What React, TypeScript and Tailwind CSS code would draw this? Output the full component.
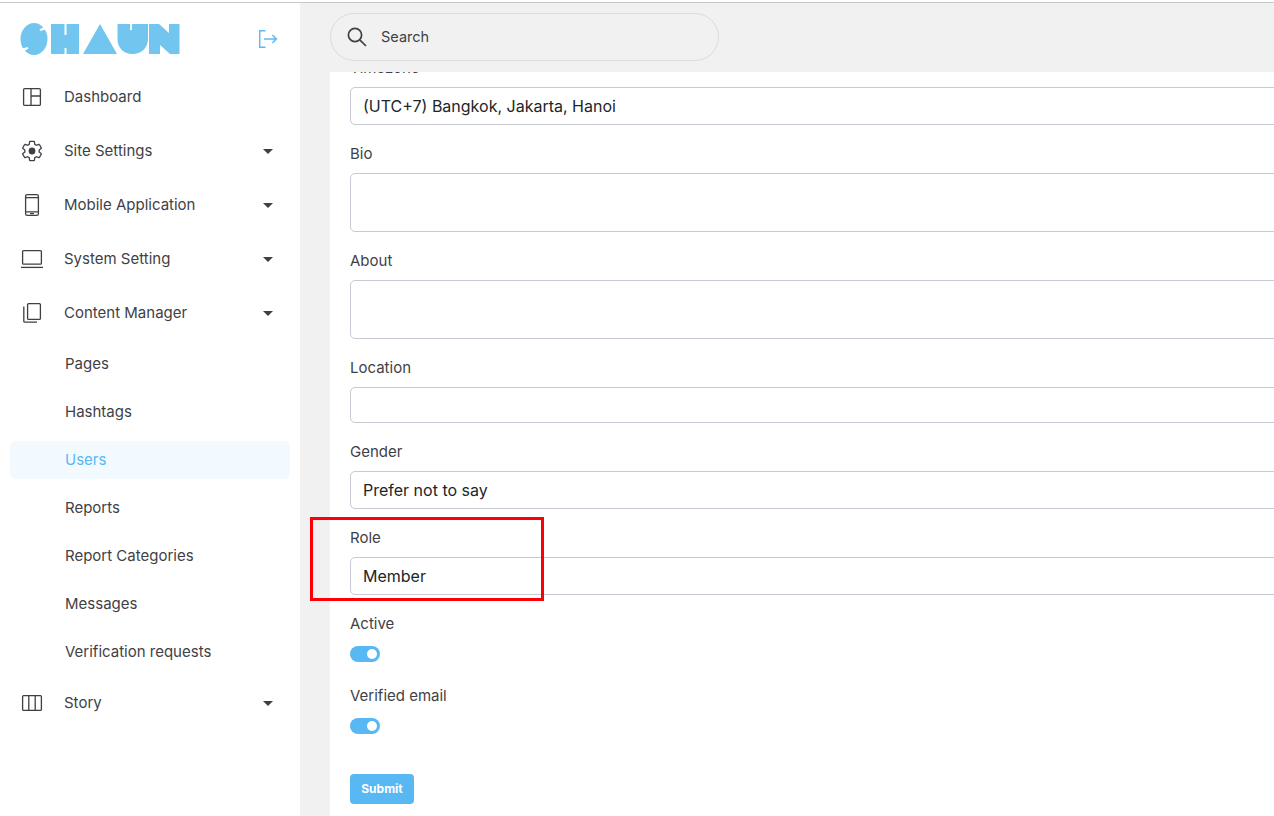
import React from "react";

const Caret = () => (
  <svg width="10" height="5" viewBox="0 0 10 5" className="shrink-0">
    <path d="M0 0H10L5 5Z" fill="#3f3f46" />
  </svg>
);

const s = { fill: "none", stroke: "#3f3f46", strokeWidth: 1.3 };

const DashIcon = () => (
  <svg width="24" height="24" viewBox="0 0 24 24">
    <rect x="3.6" y="3.6" width="16.8" height="16.8" rx="1.2" {...s} />
    <path d="M11 3.6V20.4M11 11H20.4" {...s} />
  </svg>
);
const GearIcon = () => (
  <svg width="24" height="24" viewBox="0 0 24 24">
    <path
      d="M19.14 12.94c.04-.3.06-.61.06-.94 0-.32-.02-.64-.07-.94l2.03-1.58c.18-.14.23-.41.12-.61l-1.92-3.32c-.12-.22-.37-.29-.59-.22l-2.39.96c-.5-.38-1.03-.7-1.62-.94l-.36-2.54c-.04-.24-.24-.41-.48-.41h-3.84c-.24 0-.43.17-.47.41l-.36 2.54c-.59.24-1.13.57-1.62.94l-2.39-.96c-.22-.08-.47 0-.59.22L2.74 8.87c-.12.21-.08.47.12.61l2.03 1.58c-.05.3-.09.63-.09.94s.02.64.07.94l-2.03 1.58c-.18.14-.23.41-.12.61l1.92 3.32c.12.22.37.29.59.22l2.39-.96c.5.38 1.03.7 1.62.94l.36 2.54c.05.24.24.41.48.41h3.84c.24 0 .44-.17.47-.41l.36-2.54c.59-.24 1.13-.56 1.62-.94l2.39.96c.22.08.47 0 .59-.22l1.92-3.32c.12-.22.07-.47-.12-.61l-2.01-1.58z"
      {...s}
    />
    <circle cx="12" cy="12" r="3.4" fill="#3f3f46" />
  </svg>
);
const PhoneIcon = () => (
  <svg width="24" height="24" viewBox="0 0 24 24">
    <rect x="5.6" y="1.6" width="12.8" height="20.8" rx="1.6" {...s} />
    <path d="M5.6 4.6H18.4M5.6 18.8H18.4" {...s} />
    <path d="M10 20.6H14" stroke="#3f3f46" strokeWidth="1.2" />
  </svg>
);
const LaptopIcon = () => (
  <svg width="24" height="24" viewBox="0 0 24 24">
    <rect x="2.6" y="3.6" width="18.8" height="13.6" rx="1" {...s} />
    <path d="M1 20.4H23" {...s} />
  </svg>
);
const CopyIcon = () => (
  <svg width="24" height="24" viewBox="0 0 24 24">
    <rect x="7.6" y="2.6" width="12.8" height="15.8" rx="1" {...s} />
    <path d="M3.8 5.6V20.2a1 1 0 0 0 1 1H17" {...s} />
  </svg>
);
const ColumnsIcon = () => (
  <svg width="24" height="24" viewBox="0 0 24 24">
    <rect x="2.6" y="4.6" width="18.8" height="14.8" rx="1" {...s} />
    <path d="M8.8 4.6V19.4M15.2 4.6V19.4" {...s} />
  </svg>
);

const Logo = () => (
  <svg width="160" height="34" viewBox="0 0 160 34" fill="#72c5ee">
    <ellipse cx="14" cy="17" rx="13.5" ry="16" />
    <path d="M29 6.5L20.5 9L19.5 7.5L27 3Z" fill="#ffffff" />
    <path d="M-1 27.5L7.5 25L8.5 26.5L1 31Z" fill="#ffffff" />
    <path d="M31 2H44.5V13H46.5V2H59V32H46.5V26H44.5V32H31Z" />
    <path d="M63 32L80 2L97 32Z" />
    <path d="M97.5 2H110V8H112V2H128V17C128 26 121 32 112.5 32C104 32 97.5 26 97.5 17Z" />
    <path d="M129 2H139L149 11V2H159.5V32H150L140 23V32H129Z" />
  </svg>
);

const LogoutIcon = () => (
  <svg width="20" height="20" viewBox="0 0 20 20" fill="none" stroke="#5bb9f3" strokeWidth="1.4">
    <path d="M7.5 1.7H1.7V18.3H7.5" />
    <path d="M6 10H18.4M14.4 6L18.4 10L14.4 14" />
  </svg>
);

const SearchIcon = () => (
  <svg width="22" height="22" viewBox="0 0 22 22" fill="none" stroke="#3f3f46" strokeWidth="1.7">
    <circle cx="9" cy="9" r="6.6" />
    <path d="M13.8 13.8L20 20" />
  </svg>
);

const Row = ({ icon, label, caret }: { icon: React.ReactNode; label: string; caret?: boolean }) => (
  <div className="flex h-[54px] items-center pl-5 pr-[27px]">
    <span className="flex w-6 justify-center">{icon}</span>
    <span className="ml-5 flex-1 text-[15px] text-[#3f3f46]">{label}</span>
    {caret && <Caret />}
  </div>
);

const Sub = ({ label, active }: { label: string; active?: boolean }) => (
  <div
    className={
      active
        ? "mx-[10px] flex h-[38px] items-center rounded-md bg-[#f2faff] pl-[55px] text-[15px] text-[#58b8f3]"
        : "mx-[10px] flex h-[38px] items-center pl-[55px] text-[15px] text-[#3f3f46]"
    }
  >
    {label}
  </div>
);

const Label = ({ children }: { children: React.ReactNode }) => (
  <div className="mb-[9px] h-5 text-[15px] leading-5 text-[#3f3f46]">{children}</div>
);

const TextField = ({ value, h }: { value?: string; h: string }) => (
  <div className={`${h} flex items-center rounded-[5px] border border-[#c6cbd3] bg-white pl-[12px] text-base text-[#212529]`}>
    {value}
  </div>
);

const Toggle = () => (
  <div className="flex h-4 w-[30px] items-center justify-end rounded-full bg-[#58b8f3] pr-[3px]">
    <span className="h-[10px] w-[10px] rounded-full bg-white" />
  </div>
);

export default function App() {
  return (
    <div className="relative flex h-screen w-full flex-col overflow-hidden bg-white font-['Inter',sans-serif]">
      <div className="mt-[2px] h-px shrink-0 bg-[#c8c8c8]" />
      <div className="flex min-h-0 flex-1">
        <aside className="flex w-[300px] shrink-0 flex-col bg-white">
          <div className="flex h-[67px] items-center pl-5 pr-[22px] pb-[2px] pt-[7px]">
            <Logo />
            <span className="ml-auto">
              <LogoutIcon />
            </span>
          </div>
          <Row icon={<DashIcon />} label="Dashboard" />
          <Row icon={<GearIcon />} label="Site Settings" caret />
          <Row icon={<PhoneIcon />} label="Mobile Application" caret />
          <Row icon={<LaptopIcon />} label="System Setting" caret />
          <Row icon={<CopyIcon />} label="Content Manager" caret />
          <div className="flex flex-col gap-[10px] pt-[5px]">
            <Sub label="Pages" />
            <Sub label="Hashtags" />
            <Sub label="Users" active />
            <Sub label="Reports" />
            <Sub label="Report Categories" />
            <Sub label="Messages" />
            <Sub label="Verification requests" />
          </div>
          <div className="pt-[5px]">
            <Row icon={<ColumnsIcon />} label="Story" caret />
          </div>
        </aside>
        <div className="flex min-w-0 flex-1 flex-col bg-[#f1f1f1]">
          <header className="flex h-[69px] shrink-0 items-start pl-[30px] pt-[10px]">
            <div className="flex h-12 w-[389px] items-center rounded-full border border-[#dcdcdc] pl-[15px] text-[14.5px] text-[#3f3f46]">
              <SearchIcon />
              <span className="ml-[13px]">Search</span>
            </div>
          </header>
          <main className="ml-[30px] min-h-0 flex-1 overflow-hidden bg-white">
            <form className="-mt-[14px] flex w-[1100px] flex-col gap-[19px] pl-5">
              <div>
                <Label>Timezone</Label>
                <TextField h="h-[38px]" value="(UTC+7) Bangkok, Jakarta, Hanoi" />
              </div>
              <div>
                <Label>Bio</Label>
                <TextField h="h-[59px]" />
              </div>
              <div>
                <Label>About</Label>
                <TextField h="h-[59px]" />
              </div>
              <div>
                <Label>Location</Label>
                <TextField h="h-9" />
              </div>
              <div>
                <Label>Gender</Label>
                <TextField h="h-[38px]" value="Prefer not to say" />
              </div>
              <div>
                <Label>Role</Label>
                <TextField h="h-[38px]" value="Member" />
              </div>
              <div>
                <div className="mb-3 h-5 text-[15px] leading-5 text-[#3f3f46]">Active</div>
                <Toggle />
              </div>
              <div className="mt-[5px]">
                <div className="mb-3 h-5 text-[15px] leading-5 text-[#3f3f46]">Verified email</div>
                <Toggle />
              </div>
              <button type="button" className="mt-[21px] h-[30px] w-16 rounded bg-[#58b8f3] text-xs font-bold text-white">
                Submit
              </button>
            </form>
          </main>
        </div>
      </div>
      <div className="absolute left-[310px] top-[517px] h-[84px] w-[234px] border-[3px] border-[#fb0007]" />
    </div>
  );
}
